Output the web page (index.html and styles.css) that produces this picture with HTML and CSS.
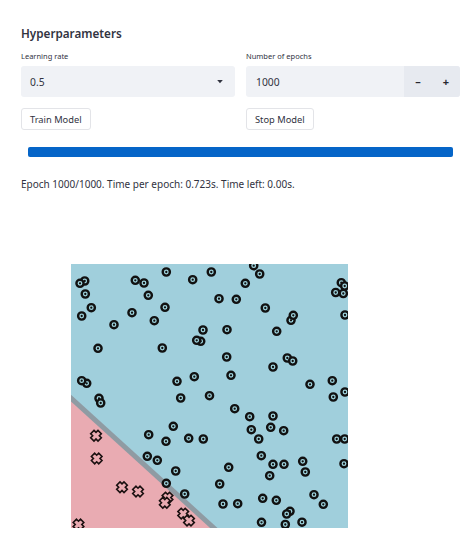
FILE: index.html
```html
<!DOCTYPE html>
<html lang="en">
<head>
<meta charset="utf-8">
<title>Hyperparameters</title>
<link rel="stylesheet" href="styles.css">
</head>
<body>
<main class="main">
  <h2 class="heading">Hyperparameters</h2>
  <div class="cols">
    <div class="col">
      <label class="label">Learning rate</label>
      <div class="select">
        <span class="value">0.5</span>
        <svg class="caret" width="8" height="5" viewBox="0 0 8 5"><path d="M1.2 1h5.6L4 4.2z" fill="#31333f"/></svg>
      </div>
      <button class="btn">Train Model</button>
    </div>
    <div class="col">
      <label class="label">Number of epochs</label>
      <div class="number">
        <span class="value">1000</span>
        <div class="steps">
          <span class="step">&#8211;</span>
          <span class="step">+</span>
        </div>
      </div>
      <button class="btn">Stop Model</button>
    </div>
  </div>
  <div class="progress"><div class="bar"></div></div>
  <p class="status">Epoch 1000/1000. Time per epoch: 0.723s. Time left: 0.00s.</p>
  <div class="plot">
    <svg width="277" height="264" viewBox="71 264 277 264">
      <defs>
        <g id="o">
          <circle r="3.6" fill="#9fd5df" stroke="#111" stroke-width="2.4"/>
          <circle r="1.15" fill="#111"/>
        </g>
        <path id="x" d="M-2 -5.3 L0 -3.3 L2 -5.3 L5.3 -2 L3.3 0 L5.3 2 L2 5.3 L0 3.3 L-2 5.3 L-5.3 2 L-3.3 0 L-5.3 -2 Z" fill="#eaabb2" stroke="#1a1010" stroke-width="1.6" stroke-linejoin="miter"/>
      </defs>
      <rect x="71" y="264" width="277" height="264" fill="#a0cfdc"/>
      <polygon points="71,398 215,529 71,529" fill="#e9abb2"/>
      <line x1="68" y1="395.3" x2="218" y2="531.8" stroke="#8f9ba3" stroke-width="5"/>
      <g>
        <use href="#o" x="84.7" y="281"/>
        <use href="#o" x="80" y="283.3"/>
        <use href="#o" x="85.3" y="294"/>
        <use href="#o" x="91.3" y="307.7"/>
        <use href="#o" x="81.7" y="316"/>
        <use href="#o" x="135.3" y="280.3"/>
        <use href="#o" x="144" y="283"/>
        <use href="#o" x="148.3" y="295.3"/>
        <use href="#o" x="166.3" y="272"/>
        <use href="#o" x="192.7" y="279.7"/>
        <use href="#o" x="211.3" y="272"/>
        <use href="#o" x="165" y="307.3"/>
        <use href="#o" x="132" y="312.7"/>
        <use href="#o" x="154.3" y="320.7"/>
        <use href="#o" x="114" y="324.7"/>
        <use href="#o" x="203" y="330"/>
        <use href="#o" x="200.7" y="341.3"/>
        <use href="#o" x="196.7" y="340.3"/>
        <use href="#o" x="98" y="348.3"/>
        <use href="#o" x="162.3" y="348"/>
        <use href="#o" x="86.7" y="383.3"/>
        <use href="#o" x="81.7" y="380.7"/>
        <use href="#o" x="177" y="381.3"/>
        <use href="#o" x="194.3" y="376.7"/>
        <use href="#o" x="99" y="398.3"/>
        <use href="#o" x="100.7" y="403"/>
        <use href="#o" x="180.7" y="398"/>
        <use href="#o" x="209.5" y="395.7"/>
        <use href="#o" x="253.7" y="265.7"/>
        <use href="#o" x="259.7" y="274"/>
        <use href="#o" x="245.3" y="283.3"/>
        <use href="#o" x="219" y="298.7"/>
        <use href="#o" x="236.3" y="299.3"/>
        <use href="#o" x="265.3" y="308"/>
        <use href="#o" x="291" y="320.3"/>
        <use href="#o" x="293.3" y="315.3"/>
        <use href="#o" x="341.3" y="282.7"/>
        <use href="#o" x="344.7" y="286"/>
        <use href="#o" x="335.7" y="292.5"/>
        <use href="#o" x="343.3" y="293.5"/>
        <use href="#o" x="345" y="315"/>
        <use href="#o" x="227" y="329.7"/>
        <use href="#o" x="276.7" y="331.3"/>
        <use href="#o" x="226.7" y="357"/>
        <use href="#o" x="287.3" y="358"/>
        <use href="#o" x="292.7" y="361"/>
        <use href="#o" x="273" y="367"/>
        <use href="#o" x="231" y="375.3"/>
        <use href="#o" x="310" y="384.3"/>
        <use href="#o" x="332.3" y="380.7"/>
        <use href="#o" x="333.3" y="397"/>
        <use href="#o" x="345" y="392"/>
        <use href="#o" x="173.3" y="426.3"/>
        <use href="#o" x="148.7" y="434.7"/>
        <use href="#o" x="166" y="441.3"/>
        <use href="#o" x="188.7" y="438.3"/>
        <use href="#o" x="203.3" y="439"/>
        <use href="#o" x="147.3" y="456.3"/>
        <use href="#o" x="157.3" y="460.3"/>
        <use href="#o" x="175.7" y="471"/>
        <use href="#o" x="166.3" y="483.3"/>
        <use href="#o" x="184.7" y="494"/>
        <use href="#o" x="234.7" y="408.7"/>
        <use href="#o" x="249.7" y="416.7"/>
        <use href="#o" x="273" y="416"/>
        <use href="#o" x="270.7" y="427.3"/>
        <use href="#o" x="251.3" y="429.7"/>
        <use href="#o" x="283.7" y="430.7"/>
        <use href="#o" x="258.7" y="439"/>
        <use href="#o" x="336.7" y="439"/>
        <use href="#o" x="344.7" y="439"/>
        <use href="#o" x="261.3" y="455.7"/>
        <use href="#o" x="273" y="464.3"/>
        <use href="#o" x="284" y="464.3"/>
        <use href="#o" x="302.7" y="461.3"/>
        <use href="#o" x="305.3" y="472"/>
        <use href="#o" x="344" y="463.7"/>
        <use href="#o" x="228.7" y="467.3"/>
        <use href="#o" x="269.7" y="475.7"/>
        <use href="#o" x="219.7" y="484"/>
        <use href="#o" x="223" y="504"/>
        <use href="#o" x="237.7" y="503.7"/>
        <use href="#o" x="262.7" y="498.3"/>
        <use href="#o" x="276.3" y="500.3"/>
        <use href="#o" x="314" y="494.7"/>
        <use href="#o" x="323.3" y="504.3"/>
        <use href="#o" x="290" y="511.3"/>
        <use href="#o" x="286.7" y="514"/>
        <use href="#o" x="261.5" y="522.3"/>
        <use href="#o" x="285.3" y="524.5"/>
        <use href="#o" x="302" y="522.2"/>
      </g>
      <g>
        <use href="#x" x="96" y="435.7"/>
        <use href="#x" x="96.7" y="458.5"/>
        <use href="#x" x="122" y="487.2"/>
        <use href="#x" x="138" y="491.5"/>
        <use href="#x" x="167.5" y="497.6"/>
        <use href="#x" x="164.8" y="502.8"/>
        <use href="#x" x="183.2" y="513.6"/>
        <use href="#x" x="189" y="520.6"/>
        <use href="#x" x="78.5" y="524.5"/>
      </g>
    </svg>
  </div>
</main>
</body>
</html>
```

FILE: styles.css
```css
* { box-sizing: border-box; }

body {
  margin: 0;
  background: #ffffff;
  color: #31333f;
  font-family: "Source Sans Pro", "Noto Sans", sans-serif;
}

.main {
  padding: 23px 14px 0 21px;
}

.heading {
  margin: 0;
  font-size: 11.7px;
  line-height: 20px;
  font-weight: 600;
  color: #31333f;
}

.cols {
  display: grid;
  grid-template-columns: 214px 214px;
  column-gap: 11px;
  margin-top: 6px;
}

.col {
  display: flex;
  flex-direction: column;
  align-items: flex-start;
}

.label {
  font-size: 7.5px;
  line-height: 14px;
  color: #31333f;
  margin-bottom: 3px;
}

.select,
.number {
  width: 100%;
  height: 31px;
  background: #f0f2f6;
  border-radius: 3px;
  display: flex;
  align-items: center;
  font-size: 10.3px;
}

.select {
  justify-content: space-between;
  padding: 0 11px 0 9px;
}

.number .value {
  flex: 1;
  padding-left: 10px;
}

.steps {
  display: flex;
  height: 100%;
  background: #e7eaf0;
  border-radius: 0 3px 3px 0;
}

.step {
  width: 28px;
  display: flex;
  align-items: center;
  justify-content: center;
  font-size: 11px;
  font-weight: 700;
  color: #262730;
}

.btn {
  margin-top: 11px;
  height: 22px;
  padding: 0 8px;
  background: #fff;
  border: 1px solid #e3e4e8;
  border-radius: 3px;
  font-family: inherit;
  font-size: 9.3px;
  color: #31333f;
}

.progress {
  margin: 17px 7px 0 7px;
  height: 10px;
  background: #f0f2f6;
  border-radius: 2px;
}

.bar {
  width: 100%;
  height: 100%;
  background: #0565c8;
  border-radius: 2px;
}

.status {
  margin: 19px 0 0 0;
  font-size: 10px;
  line-height: 16px;
  color: #31333f;
}

.plot {
  margin: 72px 0 0 50px;
  width: 277px;
  height: 264px;
}

.plot svg {
  display: block;
}
```
